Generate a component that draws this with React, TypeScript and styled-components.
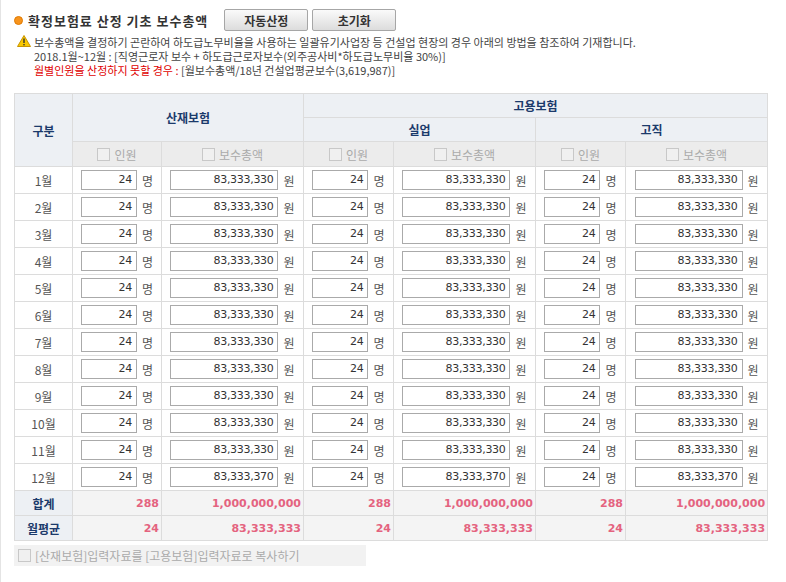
import { Fragment } from "react";
import styled, { createGlobalStyle } from "styled-components";

const Global = createGlobalStyle`
  body { margin: 0; background: #fff; font-family: "Noto Sans CJK KR", "DejaVu Sans", sans-serif; font-size: 12px; color: #444; }
`;

const Page = styled.div`
  width: 786px;
  height: 582px;
  box-sizing: border-box;
  border-left: 1px solid #e4e4e4;
  padding: 8px 0 0 13px;
`;

const TitleRow = styled.div`
  display: flex;
  align-items: center;
  height: 24px;
`;

const Dot = styled.span`
  width: 7px;
  height: 7px;
  border-radius: 50%;
  background: #f7941d;
  border: 1px solid #e07a00;
  margin-right: 5px;
`;

const Title = styled.h1`
  margin: 0 16px 0 0;
  font-size: 13px;
  font-weight: bold;
  color: #333;
  letter-spacing: 1px;
`;

const Btn = styled.button`
  width: 84px;
  height: 22px;
  margin-right: 4px;
  border: 1px solid #a6a6a6;
  border-radius: 2px;
  background: linear-gradient(#fafafa, #dcdcdc);
  font-family: inherit;
  font-size: 12px;
  font-weight: bold;
  color: #333;
`;

const Notice = styled.div`
  margin: 3px 0 0 3px;
  font-size: 11px;
  color: #444;
  div { padding-left: 17px; height: 14px; line-height: 14px; }
`;

const Warn = styled.span`
  display: inline-block;
  width: 14px;
  margin-left: -17px;
  margin-right: 3px;
`;

const Red = styled.span`
  color: #e00000;
`;

const Table = styled.table`
  margin-top: 16px;
  border-collapse: collapse;
  width: 754px;
  table-layout: fixed;
  td, th { border: 1px solid #dcdcdc; padding: 0; }
`;

const Head = styled.th`
  background: #edf0f4;
  color: #1b3a6b;
  font-size: 12px;
  font-weight: bold;
  height: 23px;
`;

const SubHead = styled.th`
  background: #ececec;
  color: #aaa;
  font-weight: normal;
  height: 24px;
  font-size: 12px;
`;

const Check = styled.span`
  display: inline-block;
  width: 11px;
  height: 11px;
  border: 1px solid #c8c8c8;
  background: #f0f0f0;
  vertical-align: -1px;
  margin-right: 4px;
`;

const Cell = styled.td`
  height: 26px;
  text-align: center;
  white-space: nowrap;
`;

const Month = styled(Cell)`
  color: #555;
`;

const Input = styled.span<{ $w: number }>`
  display: inline-block;
  box-sizing: border-box;
  width: ${(p) => p.$w}px;
  height: 20px;
  line-height: 18px;
  border: 1px solid #aaa;
  text-align: right;
  padding-right: 4px;
  color: #333;
  vertical-align: middle;
  font-family: "DejaVu Sans", sans-serif;
  font-size: 11px;
  letter-spacing: -0.3px;
`;

const Unit = styled.span`
  margin-left: 5px;
  color: #555;
  vertical-align: middle;
`;

const SumLabel = styled.th`
  background: #edf0f4;
  color: #1b3a6b;
  font-weight: bold;
  height: 24px;
`;

const SumCell = styled.td`
  background: #f4f4f4;
  color: #e4637f;
  font-weight: bold;
  text-align: right;
  padding-right: 2px !important;
  font-family: "DejaVu Sans", sans-serif;
  font-size: 11px;
`;

const CopyBar = styled.div`
  margin-top: 4px;
  width: 352px;
  height: 21px;
  background: #f2f2f2;
  display: flex;
  align-items: center;
  padding-left: 4px;
  box-sizing: border-box;
  color: #aaa;
  font-size: 12px;
`;

const months = Array.from({ length: 12 }, (_, i) => i + 1);
const groups = [0, 1, 2];

export default function App() {
  return (
    <Page>
      <Global />
      <TitleRow>
        <Dot />
        <Title>확정보험료 산정 기초 보수총액</Title>
        <Btn>자동산정</Btn>
        <Btn>초기화</Btn>
      </TitleRow>
      <Notice>
        <div>
          <Warn>
            <svg width="14" height="12" viewBox="0 0 14 12">
              <path d="M7 0.5 L13.5 11.5 H0.5 Z" fill="#f9c800" stroke="#c89400" strokeWidth="1" />
              <rect x="6.3" y="3.5" width="1.4" height="4.5" fill="#333" />
              <rect x="6.3" y="9" width="1.4" height="1.4" fill="#333" />
            </svg>
          </Warn>
          보수총액을 결정하기 곤란하여 하도급노무비율을 사용하는 일괄유기사업장 등 건설업 현장의 경우 아래의 방법을 참조하여 기재합니다.
        </div>
        <div>2018.1월~12월 : [직영근로자 보수 + 하도급근로자보수(외주공사비*하도급노무비율 30%)]</div>
        <div><Red>월별인원을 산정하지 못할 경우 :</Red> [월보수총액/18년 건설업평균보수(3,619,987)]</div>
      </Notice>
      <Table>
        <colgroup>
          <col style={{ width: 58 }} />
          <col style={{ width: 89 }} />
          <col style={{ width: 142 }} />
          <col style={{ width: 90 }} />
          <col style={{ width: 142 }} />
          <col style={{ width: 90 }} />
          <col style={{ width: 142 }} />
        </colgroup>
        <thead>
          <tr>
            <Head rowSpan={3}>구분</Head>
            <Head rowSpan={2} colSpan={2}>산재보험</Head>
            <Head colSpan={4}>고용보험</Head>
          </tr>
          <tr>
            <Head colSpan={2}>실업</Head>
            <Head colSpan={2}>고직</Head>
          </tr>
          <tr>
            {groups.map((k) => (
              <Fragment key={k}>
                <SubHead><Check />인원</SubHead>
                <SubHead><Check />보수총액</SubHead>
              </Fragment>
            ))}
          </tr>
        </thead>
        <tbody>
          {months.map((m) => {
            const amt = m === 12 ? "83,333,370" : "83,333,330";
            return (
              <tr key={m}>
                <Month>{m}월</Month>
                {groups.map((k) => (
                  <Fragment key={k}>
                    <Cell><Input $w={56}>24</Input><Unit>명</Unit></Cell>
                    <Cell><Input $w={108}>{amt}</Input><Unit>원</Unit></Cell>
                  </Fragment>
                ))}
              </tr>
            );
          })}
          <tr>
            <SumLabel>합계</SumLabel>
            {groups.map((k) => (
              <Fragment key={k}>
                <SumCell>288</SumCell>
                <SumCell>1,000,000,000</SumCell>
              </Fragment>
            ))}
          </tr>
          <tr>
            <SumLabel>월평균</SumLabel>
            {groups.map((k) => (
              <Fragment key={k}>
                <SumCell>24</SumCell>
                <SumCell>83,333,333</SumCell>
              </Fragment>
            ))}
          </tr>
        </tbody>
      </Table>
      <CopyBar><Check />[산재보험]입력자료를 [고용보험]입력자료로 복사하기</CopyBar>
    </Page>
  );
}
